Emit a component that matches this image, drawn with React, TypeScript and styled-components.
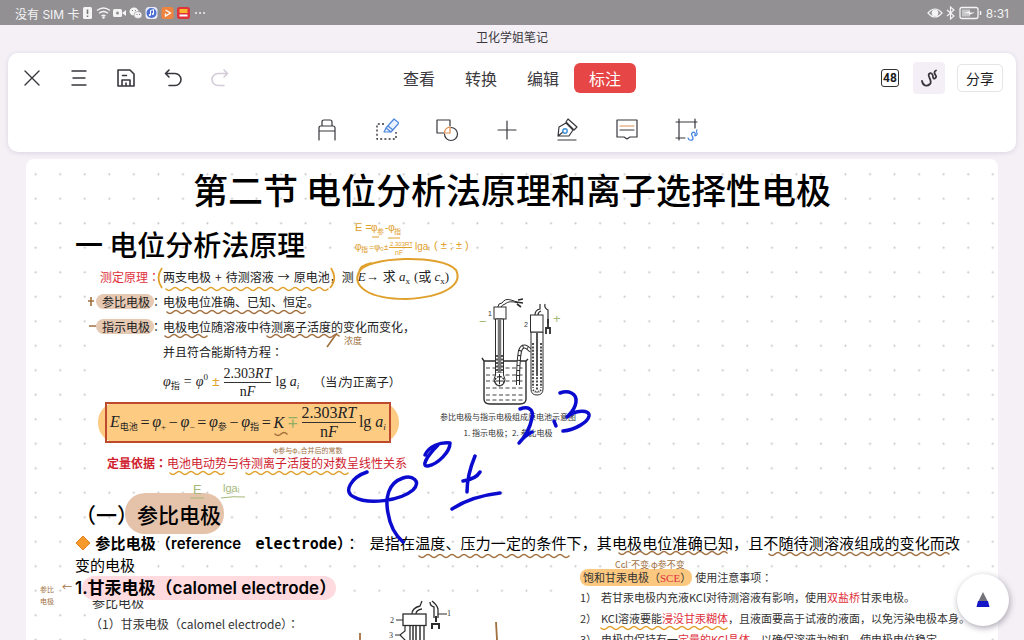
import React from "react";
import styled, { createGlobalStyle } from "styled-components";

const CJK = `"Noto Sans CJK SC"`;
const ORANGE = "#e0a02c";
const BROWN = "#a0703f";
const GREEN = "#a5b878";
const RED = "#e0303c";
const INK = "#0b0bd0";

const GlobalStyle = createGlobalStyle`
  * { box-sizing: border-box; }
  body {
    margin: 0;
    background: #f4f0f6;
    color: #1c1c1e;
    font-family: "Liberation Sans", ${CJK}, sans-serif;
  }
  button { font: inherit; color: inherit; padding: 0; border: 0; background: none; }
  h1, h2, h3, h4, p, figure, ul { margin: 0; padding: 0; font-weight: inherit; }
`;

const Screen = styled.div`
  position: relative;
  display: flex;
  flex-direction: column;
  height: 100vh;
  overflow: hidden;
`;

const StatusBar = styled.header`
  display: flex;
  flex: none;
  justify-content: space-between;
  align-items: center;
  height: 25px;
  padding: 1px 15px 0;
  background: #929093;
  color: #f4f4f4;
  font: 12px Inter, ${CJK}, sans-serif;
`;

const StatusGroup = styled.div<{ $gap: number }>`
  display: flex;
  align-items: center;
  gap: ${(p) => p.$gap}px;
`;

const DocName = styled.h1`
  flex: none;
  height: 28px;
  font: 12px/24px ${CJK}, sans-serif;
  color: #3a383d;
  text-align: center;
`;

const Toolbar = styled.nav`
  flex: none;
  margin: 0 8px 7px;
  border-radius: 10px;
  background: #fff;
  box-shadow: 0 1px 5px #d9d2e2;
`;

const MainRow = styled.div`
  display: grid;
  grid-template-columns: 1fr auto 1fr;
  align-items: center;
  height: 50px;
`;

const Group = styled.div<{ $end?: boolean }>`
  display: flex;
  align-items: center;
  justify-content: ${(p) => (p.$end ? "flex-end" : "flex-start")};
  gap: ${(p) => (p.$end ? 12 : 0)}px;
  padding-right: ${(p) => (p.$end ? 13 : 0)}px;
`;

const IconButton = styled.button<{ $width: number; $active?: boolean }>`
  display: grid;
  place-items: center;
  width: ${(p) => p.$width}px;
  height: 32px;
  border-radius: 4px;
  background: ${(p) => (p.$active ? "#f4eff6" : "transparent")};
`;

const Tab = styled.button<{ $active?: boolean }>`
  width: 62px;
  height: 30px;
  border-radius: 6px;
  font: 16px/30px ${CJK}, sans-serif;
  background: ${(p) => (p.$active ? "#e64646" : "transparent")};
  color: ${(p) => (p.$active ? "#fff" : "#3c3a40")};
`;

const PageCount = styled.button`
  width: 18px;
  height: 18px;
  margin-right: 2px;
  border: 1px solid #333;
  border-radius: 3px;
  font: 700 12px/17px Roboto, sans-serif;
  text-align: center;
`;

const ShareButton = styled.button`
  width: 46px;
  height: 28px;
  border: 1px solid #e6e3e9;
  border-radius: 5px;
  font: 14px/26px ${CJK}, sans-serif;
`;

const ToolRow = styled.div`
  display: flex;
  justify-content: center;
  height: 49px;
  padding: 11px 11px 0 0;
`;

const Paper = styled.main`
  position: relative;
  flex: 1;
  margin: 0 26px;
  border-radius: 8px 8px 0 0;
  background: #fff;
  overflow: hidden;
`;

const Dots = styled.svg`
  position: absolute;
  inset: 0;
  width: 100%;
  height: 100%;
`;

const Ink = styled.svg`
  position: absolute;
  top: 0;
  left: 0;
  pointer-events: none;
`;

const Content = styled.article`
  position: relative;
  padding: 0 38px 0 49px;
  color: #000;
`;

const Title = styled.h2`
  height: 64px;
  margin: 0 -38px 0 -49px;
  font: 500 35px/60px ${CJK}, sans-serif;
  text-align: center;
`;

const Heading = styled.h3`
  height: 41px;
  font: 500 28px/43px ${CJK}, sans-serif;
`;

const Clip = styled.section`
  display: flex;
  width: 502px;
  height: 212px;
  margin-left: 20px;
  background: #fff;
`;

const ClipText = styled.div`
  width: 341px;
  padding-left: 5px;
`;

/* Colon centred in its square, as in the pasted slides */
const Colon = styled.span`
  font-family: "Noto Sans CJK JP", sans-serif;
`;

const Line = styled.p<{ $indent?: boolean; $tight?: boolean }>`
  display: flex;
  align-items: center;
  gap: ${(p) => (p.$tight ? 0 : 4)}px;
  height: 25px;
  padding-left: ${(p) => (p.$indent ? 63 : 0)}px;
  font: 12px/25px ${CJK}, sans-serif;
  color: #222;
  white-space: nowrap;
`;

const Term = styled.span<{ $marked?: boolean; $red?: boolean }>`
  flex: none;
  width: 59px;
  color: ${(p) => (p.$red ? RED : "inherit")};
  padding-left: ${(p) => (p.$marked ? 2 : 0)}px;

  mark {
    display: inline-block;
    height: 15px;
    margin: 0 -4px 0 -6px;
    padding: 0 4px 0 6px;
    border-radius: 8px;
    background: #e6c9b3;
    color: inherit;
    line-height: 15px;
  }
`;

const Math = styled.div<{ $size: number }>`
  display: flex;
  align-items: center;
  gap: 4px;
  font: ${(p) => p.$size}px/18px "Liberation Serif", ${CJK}, serif;
  color: #222;
  white-space: nowrap;

  sub { font-size: 9px; line-height: 9px; vertical-align: -3px; }
  sup { font-size: 9px; line-height: 9px; vertical-align: 6px; }
`;

const NernstRow = styled(Math)`
  height: 34px;
  margin: 1px 0 3px 63px;
`;

const BoxedRow = styled(Math)`
  width: 301px;
  height: 41px;
  margin-left: -2px;
  border-radius: 20px;
  background: #fdcb82;
`;

const Frame = styled.div`
  display: flex;
  align-items: center;
  justify-content: space-between;
  flex: 1;
  height: 41px;
  margin: 0 8px 0 7px;
  padding: 0 3px;
  border: 2px solid #bd4a2c;
`;

const Fraction = styled.span<{ $row: number }>`
  display: inline-flex;
  flex-direction: column;
  text-align: center;
  line-height: ${(p) => p.$row}px;

  span:first-child { border-bottom: 1px solid #333; }
`;

const Plain = styled.span`
  margin-left: 10px;
  font: 12px/24px ${CJK}, sans-serif;
`;

const Tint = styled.span<{ $color: string; $small?: boolean; $serif?: boolean; $bold?: boolean }>`
  color: ${(p) => p.$color};
  ${(p) => p.$small && "font-size: 12px;"}
  ${(p) => p.$bold && "font-weight: 700;"}
  ${(p) => p.$serif && `font-family: "Liberation Serif", serif;`}
`;

const BasisLine = styled(Line)`
  margin-top: 7px;
  padding-left: 7px;
  color: #cf2230;
`;

const Figure = styled.figure`
  flex: 1;
  padding-top: 28px;

  svg { display: block; margin: 0 0 1px 28px; }
`;

const Caption = styled.figcaption`
  width: 144px;
  font: 8px/16px ${CJK}, sans-serif;
  text-align: center;
  color: #333;
  white-space: nowrap;
`;

const SubHeading = styled.h3`
  height: 39px;
  margin: 17px 0 0;
  font: 500 21px/42px ${CJK}, sans-serif;

  mark {
    display: inline-block;
    height: 41px;
    margin-left: -13px;
    padding: 0 3px 0 12px;
    border-radius: 20px;
    background: #e5c3ab;
    color: inherit;
  }
`;

const Definition = styled.p`
  height: 44px;
  font: 15px/22px Inter, ${CJK}, sans-serif;
  text-align: justify;

  svg { vertical-align: -2px; }
  b { font-weight: 600; }
  b + b { margin-left: 10px; font-family: "DejaVu Sans Mono", ${CJK}, monospace; font-weight: 700; }
  ${Colon} { margin-right: 10px; }
`;

const Columns = styled.div`
  display: flex;
  align-items: flex-start;
`;

const LeftColumn = styled.div`
  width: 312px;
`;

const PinkHeading = styled.h4`
  height: 24px;
  font: 600 17px/24px Inter, ${CJK}, sans-serif;
  white-space: nowrap;

  span { position: relative; z-index: 1; }
  mark {
    display: inline-block;
    height: 24px;
    margin-left: -6px;
    padding-left: 6px;
    border-radius: 12px;
    background: #ffdadf;
    color: inherit;
  }
`;

const Excerpt = styled.div`
  height: 50px;
  margin-left: 15px;
  padding-left: 2px;
  overflow: hidden;
  background: #fff;
  font: 12px/25px ${CJK}, sans-serif;
  color: #333;

  p { margin-left: -2px; }
  p:first-child { height: 11px; font-size: 13px; line-height: 4px; margin-left: 0; }
`;

const CellFigure = styled.svg`
  flex: none;
  margin-top: 22px;
  background: #fff;
`;

const Notes = styled.section`
  flex: 1;
  min-width: 0;
  height: 80px;
  margin: -7px -30px 0 0;
  padding-left: 7px;
  background: #fff;
  color: #333;
  font: 11px/21px ${CJK}, sans-serif;
  white-space: nowrap;

  h4 { line-height: 16px; margin-bottom: 1px; }
  mark {
    display: inline-block;
    padding: 0 1px 0 3px;
    margin-right: 3px;
    border-radius: 8px;
    background: #fcc880;
    color: inherit;
  }
  li { display: flex; }
  li > span:first-child { width: 21px; }
`;

const PenButton = styled.button`
  position: absolute;
  right: 15px;
  bottom: 14px;
  display: grid;
  place-items: center;
  width: 52px;
  height: 52px;
  border-radius: 50%;
  background: #fff;
  box-shadow: 1px 2px 6px #aaa5b0;
`;

/** Hand-drawn looking wavy underline between two x positions. */
function Wave({ from, to, y, color }: { from: number; to: number; y: number; color: string }) {
  let d = `M${from} ${y}`;
  let up = false;
  for (let x = from; x + 6 <= to; x += 6) {
    d += ` q3 ${up ? -3 : 3} 6 0`;
    up = !up;
  }
  return <path d={d} fill="none" stroke={color} strokeWidth="1.6" strokeLinecap="round" />;
}

type IconProps = { size?: number; color?: string; children: React.ReactNode };
function Icon({ size = 24, color = "#38363c", children }: IconProps) {
  return (
    <svg width={size} height={size} viewBox="0 0 24 24" fill="none" stroke={color} strokeWidth="1.4" strokeLinecap="round" strokeLinejoin="round">
      {children}
    </svg>
  );
}

const fileActions = [
  { label: "关闭", color: "#38363c", art: <path d="M5 5l14 14M19 5L5 19" /> },
  { label: "目录", color: "#38363c", art: <path d="M5 5h14M6 12h12M5 19h14" /> },
  {
    label: "保存",
    color: "#38363c",
    art: <path strokeWidth="1.600" d="M4 4h12l4 4v12H4zM8 20v-6h8v6M8.500 9.500h4M12 17v3" />,
  },
  { label: "撤销", color: "#38363c", art: <path strokeWidth="1.600" d="M8 4L4.500 7.500L8 11M4.500 7.500H14a6 6 0 0 1 0 12H8" /> },
  { label: "重做", color: "#d3ccd8", art: <path strokeWidth="1.600" d="M16 4l3.500 3.500L16 11M19.500 7.500H10a6 6 0 0 0 0 12h6" /> },
];

const tools = [
  { label: "荧光笔", art: <path strokeWidth="1.200" d="M4 22V10q0-2 2-2h12q2 0 2 2v12M4 13h16M7 8V4q0-2 2-2h6q2 0 2 2v4" /> },
  {
    label: "区域高亮",
    art: (
      <>
        <path strokeDasharray="2 2.200" strokeLinecap="butt" d="M9 6H2v15h19V14" />
        <path stroke="#4b86dc" fill="#eaf2ff" strokeWidth="1.200" d="M11 10l8-9 5 4-8 9zM11 10l-2 4h5l2 0M13 8l5 4" />
      </>
    ),
  },
  {
    label: "形状",
    art: (
      <>
        <path strokeWidth="1.200" d="M9 15H2V2h13v6" />
        <path strokeWidth="1.200" d="M16 9.500a6.500 6.500 0 1 1-6.500 6.500" />
        <path stroke="#e28a48" strokeWidth="1.200" d="M9.500 15q0-5 5.500-6v6z" />
      </>
    ),
  },
  { label: "添加", art: <path strokeWidth="1.200" d="M12 3v18M3 12h18" /> },
  {
    label: "钢笔",
    art: (
      <>
        <path strokeWidth="1.200" d="M3 22h18M3 18l1-9 7-4 7 7-4 6zM11 4l2-3 9 8-3 3zM3 18l5-4" />
        <circle cx="10" cy="13" r="2.200" stroke="#3e8fd6" fill="#fff" />
      </>
    ),
  },
  {
    label: "注释",
    art: (
      <>
        <path strokeWidth="1.200" d="M2 2h20v17h-7l-3 2-3-2H2z" />
        <path stroke="#d79352" strokeWidth="1.200" d="M5 8h14" />
        <path strokeWidth="1.200" d="M5 12h14" />
      </>
    ),
  },
  {
    label: "裁剪",
    art: (
      <>
        <path strokeWidth="1.200" d="M4 1v21M1 4h21M20 1v9M1 20h9" />
        <path stroke="#3f7fe0" strokeWidth="1.200" d="M13 20c1 3 5 3 5 0s-3-3-1-5 4 0 3 2 3 0 2-2-1-2 0-3" />
      </>
    ),
  },
];

function StatusIcons() {
  return (
    <svg width="126" height="16" viewBox="82 5 126 16" fill="none">
      <rect x="84" y="7" width="9" height="12" rx="1.500" fill="#f4f4f4" />
      <path d="M88.500 9.500v4.500M88.500 15.500v1.500" stroke="#777" strokeWidth="1.600" />
      <path d="M98 10.500q6.500-5 13 0M100 13.300q4.500-3.500 9 0M102.500 16q2-1.500 4 0" stroke="#f4f4f4" strokeWidth="1.400" />
      <circle cx="104.500" cy="17.500" r="1.200" fill="#f4f4f4" />
      <rect x="114" y="9" width="9" height="8" rx="1.500" fill="#f4f4f4" />
      <path d="M123 13l4-3v6z" fill="#f4f4f4" />
      <circle cx="118.500" cy="13" r="1.500" fill="#929093" />
      <ellipse cx="135" cy="11.500" rx="4.500" ry="4" fill="#f4f4f4" />
      <ellipse cx="139" cy="15" rx="4" ry="3.500" fill="#f4f4f4" stroke="#929093" strokeWidth=".6" />
      <path d="M133.500 10.500h.1M136.500 10.500h.1M138 14.500h.1M140.500 14.500h.1" stroke="#777" strokeLinecap="round" />
      <rect x="146.500" y="7" width="12" height="12" rx="3.500" fill="#e8ecfa" />
      <circle cx="152.500" cy="13" r="5" fill="#4e6fd2" />
      <path d="M151.500 15v-4.500l3-1v4.500" stroke="#fff" />
      <circle cx="150.800" cy="15" r="1" fill="#fff" />
      <circle cx="153.800" cy="14" r="1" fill="#fff" />
      <rect x="162.500" y="7" width="12" height="12" rx="2.500" fill="#ee8440" />
      <path d="M166.500 10l5 3-5 3v-2.500" stroke="#fff" strokeWidth="1.300" />
      <rect x="178" y="7" width="13" height="12" rx="2.500" fill="#df343c" />
      <path d="M180.500 9h8v4h-8z" fill="#ffb52c" />
      <path d="M180.500 15.500h8" stroke="#fff" strokeWidth="2" />
      <path d="M197 13h.1M201 13h.1M205 13h.1" stroke="#f4f4f4" strokeWidth="1.800" strokeLinecap="round" />
    </svg>
  );
}

function PowerIcons() {
  return (
    <svg width="56" height="16" viewBox="925 5 56 16" fill="none" stroke="#f4f4f4">
      <path d="M926 13q7-8 14 0q-7 8-14 0z" strokeWidth="1.200" />
      <circle cx="933" cy="13" r="3" fill="#f4f4f4" />
      <path d="M945 10l7 6-3.500 3V7l3.500 3-7 6" strokeWidth="1.200" />
      <rect x="958" y="7.500" width="18" height="11" rx="2" strokeWidth="1.300" />
      <path d="M960 9.500h8v7h-8z" fill="#c6c5c7" stroke="none" />
      <path d="M962 13l6-2v1.500h5l-6 2.500v-1.500z" fill="#f4f4f4" stroke="none" />
      <path d="M978.500 11v4" strokeWidth="1.500" />
    </svg>
  );
}

function CellDrawing() {
  const levels = [368, 375, 381, 388, 395, 400];
  return (
    <svg width="96" height="116" viewBox="464 292 96 116" fill="none" stroke="#2d2d2d">
      <path d="M482 358l2 3v38q0 5 6 5h30q6 0 6-5v-38l2-2M484 361h42" strokeWidth="1.400" />
      {levels.map((y) => (
        <path key={y} d={`M486 ${y}h39`} strokeDasharray="4 2.500" strokeWidth=".9" />
      ))}
      <rect x="494" y="307" width="12" height="12" fill="#fff" />
      <path d="M495.500 319v56q-3 4 0 9q4 4 8 0q3-5 0-9v-56z" fill="#fff" />
      <path d="M499.500 319v54" stroke="#777" strokeWidth="3.500" />
      <path d="M497 355v18M502 355v18" strokeDasharray="2 1.500" strokeWidth="1.600" />
      <circle cx="499.500" cy="381" r="4.500" strokeDasharray="2 1" strokeWidth="1.300" />
      <path d="M496 381h7M499.500 374v10" />
      <path d="M498 307q0-4 4-4q3-5 9-3l6 2M501 307q1-2 4-3q4-4 13-1" />
      <path d="M516 302l7 1M518 300l5-1M517 304l4 3" strokeWidth="1.600" />
      <path d="M531 351q-8-9-11 0q-2 10-2 34" strokeWidth="4" />
      <path d="M531 351q-8-9-11 0q-2 10-2 34" stroke="#fff" strokeWidth="2" strokeDasharray="4 1" />
      <path d="M531 332v57q0 6 6 6t6-6v-57z" fill="#fff" />
      <path d="M533 343v45M541 343v45M537 350v40" strokeDasharray="2 1.400" strokeWidth="1.700" />
      <path d="M537 333v43" stroke="#555" strokeWidth="2" />
      <path d="M533 390q4 4 8 0" strokeDasharray="1 1" strokeWidth="2" />
      <rect x="530.500" y="315" width="12.500" height="17" fill="#fff" />
      <path d="M535 315q0-5 5-6v-5M538 315q0-3 3-4M545 304q-1 4 3 6v13" strokeWidth="1.200" />
      <path d="M548 319v9M546 334v-6h4v6" strokeWidth="1.800" />
      <g fill="#333" stroke="none" fontFamily="Liberation Sans, sans-serif" fontSize="7">
        <text x="488" y="316">1</text>
        <text x="524" y="327">2</text>
      </g>
    </svg>
  );
}

function CalomelDrawing() {
  return (
    <CellFigure width="186" height="46" viewBox="387 598 186 46" fill="none" stroke="#2d2d2d">
      <path d="M412 614q0-6 8-8l2-5M416 614q0-4 6-5M430 602q0 4 4 5v11M432 601q5 4 6 8v9" strokeWidth="1.300" />
      <path d="M436 616v6M432 629v-5h7v5" strokeWidth="2" />
      <rect x="403" y="614" width="23" height="11.500" fill="#fff" strokeWidth="1.300" />
      <path d="M410 626v18M424 626v18" strokeWidth="1.300" />
      <path d="M413 626v18M416 626v18M420 626v18" stroke="#555" strokeWidth="1.800" />
      <path d="M396 620h7M438 614h9M395 635h5l5-4v-5M400 635l5 5v4" strokeWidth="1.200" />
      <g fill="#333" stroke="none" fontFamily="Liberation Serif, serif" fontSize="8">
        <text x="447" y="616">1</text>
        <text x="390" y="623">2</text>
        <text x="389" y="638">3</text>
      </g>
    </CellFigure>
  );
}

function Annotations() {
  return (
    <Ink width="972" height="481" viewBox="26 159 972 481" fill="none">
      <g fontFamily="Liberation Sans, Noto Sans CJK SC, sans-serif" fontSize="11" fill={ORANGE}>
        <text x="355" y="231">E =</text>
        <text x="371" y="231" fontSize="10">φ</text>
        <text x="377" y="234" fontSize="7">参</text>
        <text x="385" y="231" fontSize="10">-φ</text>
        <text x="394" y="234" fontSize="7">指</text>
        <text x="355" y="250" fontSize="10">φ</text>
        <text x="361" y="252" fontSize="7">指</text>
        <text x="369" y="250" fontSize="9">=φ₀±</text>
        <text x="390" y="246" fontSize="6">2.303RT</text>
        <text x="395" y="255" fontSize="7">nF</text>
        <text x="415" y="250" fontSize="10">lgaᵢ</text>
        <text x="434" y="249">( ± ; ± )</text>
      </g>
      <path d="M389 247.500h23M372 237h7M388 238h12" stroke={ORANGE} />

      <path d="M162 268q-7 10 0 20M331 268q7 11-1 20" stroke={ORANGE} strokeWidth="1.800" />
      <path d="M359 272C366 256 442 254 456 270C463 284 446 297 406 299C368 299 352 286 359 272C360 266 366 264 372 263" stroke={ORANGE} strokeWidth="2" />
      <Wave from={166} to={333} y={289} color={ORANGE} />
      <Wave from={167} to={310} y={312} color={BROWN} />
      <Wave from={165} to={211} y={336} color={BROWN} />
      <Wave from={267} to={343} y={336} color={BROWN} />
      <path d="M337 333l-10 14M91 297v9M88 301h6M89 326h7" stroke={BROWN} strokeWidth="1.600" />
      <g fontFamily="Noto Sans CJK SC, sans-serif" fill={BROWN}>
        <text x="344" y="344" fontSize="9">浓度</text>
        <text x="273" y="453" fontSize="7">φ参与φ₀合并后的常数</text>
        <text x="615" y="568" fontSize="9">Ccl⁻不变  φ参不变</text>
        <text x="40" y="592" fontSize="7">参比</text>
        <text x="40" y="604" fontSize="7">电极</text>
        <text x="62" y="591" fontSize="10">←</text>
      </g>
      <Wave from={275} to={289} y={434} color={BROWN} />
      <Wave from={170} to={229} y={473} color={ORANGE} />
      <Wave from={246} to={352} y={473} color={ORANGE} />
      <g fontFamily="Liberation Sans, sans-serif" fontSize="13" fill={GREEN}>
        <text x="193" y="494">E</text>
        <text x="223" y="492" fontSize="11">lgaᵢ</text>
        <text x="479" y="326">−</text>
        <text x="553" y="323">+</text>
      </g>
      <path d="M190 498h14M221 498q12-2 24-1" stroke={GREEN} />
      <Wave from={419} to={570} y={556} color={BROWN} />
      <Wave from={619} to={727} y={553} color={BROWN} />
      <Wave from={769} to={953} y={554} color={BROWN} />
      <Wave from={601} to={727} y={628} color={ORANGE} />
      <path d="M496 622l1 18M360 633v7" stroke={BROWN} strokeWidth="1.800" />

      <g stroke={INK} strokeWidth="3.500" strokeLinecap="round" strokeLinejoin="round">
        <path d="M367 472C352 477 342 492 354 497C368 505 400 501 413 490C422 481 412 475 403 478C388 483 385 498 388 513C390 526 395 535 403 542" />
        <path d="M425 455C429 446 440 442 450 443C450 452 438 464 428 466C421 467 426 457 438 445" />
        <path d="M475 456C470 468 467 478 467 492M463 481C470 480 477 477 480 472M452 509C464 501 482 495 500 493" />
        <path d="M520 409C528 406 534 409 532 418C530 428 525 437 519 443C523 438 528 434 532 432M554 421l2 5" />
        <path d="M560 393C568 390 577 393 576 402C575 410 570 414 567 417C575 410 590 409 589 416C588 422 575 430 563 431" />
      </g>
    </Ink>
  );
}

export default function App() {
  return (
    <Screen>
      <GlobalStyle />
      <StatusBar>
        <StatusGroup $gap={1}>
          <span>没有 SIM 卡</span>
          <StatusIcons />
        </StatusGroup>
        <StatusGroup $gap={3}>
          <PowerIcons />
          <span>8:31</span>
        </StatusGroup>
      </StatusBar>
      <DocName>卫化学姐笔记</DocName>

      <Toolbar>
        <MainRow>
          <Group>
            {fileActions.map((a) => (
              <IconButton key={a.label} $width={47} aria-label={a.label}>
                <Icon color={a.color}>{a.art}</Icon>
              </IconButton>
            ))}
          </Group>
          <Group>
            {["查看", "转换", "编辑", "标注"].map((name) => (
              <Tab key={name} $active={name === "标注"}>{name}</Tab>
            ))}
          </Group>
          <Group $end>
            <PageCount>48</PageCount>
            <IconButton $width={32} $active aria-label="手写">
              <Icon>
                <path strokeWidth="1.800" d="M5 15c1 5 5 6 8 3s-3-8-1-10 4 0 4 3 4 1 3-1-3-4 0-5.500" />
              </Icon>
            </IconButton>
            <ShareButton>分享</ShareButton>
          </Group>
        </MainRow>
        <ToolRow>
          {tools.map((t) => (
            <IconButton key={t.label} $width={60} aria-label={t.label}>
              <Icon>{t.art}</Icon>
            </IconButton>
          ))}
        </ToolRow>
      </Toolbar>

      <Paper>
        <Dots>
          <pattern id="dots" x="-2.500" y="3" width="24.540" height="24.500" patternUnits="userSpaceOnUse">
            <circle cx="12.200" cy="12.200" r="1" fill="#bebcc2" />
          </pattern>
          <rect width="100%" height="100%" fill="url(#dots)" />
        </Dots>
        <Content>
          <Title>第二节 电位分析法原理和离子选择性电极</Title>
          <Heading>一 电位分析法原理</Heading>

          <Clip>
            <ClipText>
              <Line>
                <Term $red>测定原理<Colon>：</Colon></Term>
                <span>两支电极</span><span>+</span><span>待测溶液</span><span>→</span><span>原电池，测</span>
                <Math as="span" $size={13}>
                  <span><i>E</i>→</span>
                  <span>求 <i>a</i><sub>x</sub></span>
                  <span>(或 <i>c</i><sub>x</sub>)</span>
                </Math>
              </Line>
              <Line>
                <Term $marked><mark>参比电极</mark><Colon>：</Colon></Term>
                <span>电极电位准确、已知、恒定。</span>
              </Line>
              <Line>
                <Term $marked><mark>指示电极</mark><Colon>：</Colon></Term>
                <span>电极电位随溶液中待测离子活度的变化而变化，</span>
              </Line>
              <Line $indent $tight>并且符合能斯特方程<Colon>：</Colon></Line>
              <NernstRow $size={14}>
                <span><i>φ</i><sub>指</sub></span>
                <span>=</span>
                <span><i>φ</i><sup>0</sup></span>
                <Tint $color={ORANGE} $bold>±</Tint>
                <Fraction $row={17}>
                  <span>2.303<i>RT</i></span>
                  <span>n<i>F</i></span>
                </Fraction>
                <span>lg <i>a<sub>i</sub></i></span>
                <Plain>（当<i>i</i>为正离子）</Plain>
              </NernstRow>
              <BoxedRow $size={16}>
                <Frame>
                  <span><i>E</i><sub>电池</sub></span>
                  <span>=</span>
                  <span><i>φ</i><sub>+</sub></span>
                  <span>−</span>
                  <span><i>φ</i><sub>−</sub></span>
                  <span>=</span>
                  <span><i>φ</i><sub>参</sub></span>
                  <span>−</span>
                  <span><i>φ</i><sub>指</sub></span>
                  <span>=</span>
                  <i>K</i>
                  <Tint $color="#8fae62" $small $bold>∓</Tint>
                  <Fraction $row={18}>
                    <span>2.303<i>RT</i></span>
                    <span>n<i>F</i></span>
                  </Fraction>
                  <span>lg <i>a<sub>i</sub></i></span>
                </Frame>
              </BoxedRow>
              <BasisLine $tight>
                <b>定量依据<Colon>：</Colon></b>
                <span>电池电动势与待测离子活度的对数呈线性关系</span>
              </BasisLine>
            </ClipText>
            <Figure>
              <CellDrawing />
              <Caption>参比电极与指示电极组成原电池示意图</Caption>
              <Caption as="p">1. 指示电极；2. 参比电极</Caption>
            </Figure>
          </Clip>

          <SubHeading>（一）<mark>参比电极</mark></SubHeading>
          <Definition>
            <svg width="16" height="16" viewBox="0 0 16 16">
              <path d="M8 1l7 7-7 7-7-7z" fill="#f79a2b" stroke="#e5811c" />
            </svg>{" "}
            <b>参比电极（reference</b> <b>electrode）</b>
            <Colon>：</Colon>是指在温度、压力一定的条件下，其电极电位准确已知，且不随待测溶液组成的变化而改变的电极
          </Definition>

          <Columns>
            <LeftColumn>
              <PinkHeading><span>1.</span><mark>甘汞电极（calomel electrode）</mark></PinkHeading>
              <Excerpt>
                <p>参比电极</p>
                <p>（1）甘汞电极（calomel electrode）<Colon>：</Colon></p>
              </Excerpt>
            </LeftColumn>
            <CalomelDrawing />
            <Notes>
              <h4><mark>饱和甘汞电极（<Tint $color={RED} $serif>SCE</Tint>）</mark>使用注意事项<Colon>：</Colon></h4>
              <ul>
                <li><span>1）</span><span>若甘汞电极内充液KCl对待测溶液有影响，使用<Tint $color={RED}>双盐桥</Tint>甘汞电极。</span></li>
                <li><span>2）</span><span>KCl溶液要能<Tint $color={RED}>浸没甘汞糊体</Tint>，且液面要高于试液的液面，以免污染电极本身。</span></li>
                <li><span>3）</span><span>电极中保持有一<Tint $color={RED}>定量的KCl晶体</Tint>，以确保溶液为饱和，使电极电位稳定。</span></li>
              </ul>
            </Notes>
          </Columns>
        </Content>
        <Annotations />
      </Paper>

      <PenButton aria-label="画笔">
        <svg width="16" height="18" viewBox="0 0 16 18">
          <path d="M8 1l5 10H3z" fill="#747279" />
          <path d="M3 10h10l1.500 6h-13z" fill="#1414c8" />
        </svg>
      </PenButton>
    </Screen>
  );
}
